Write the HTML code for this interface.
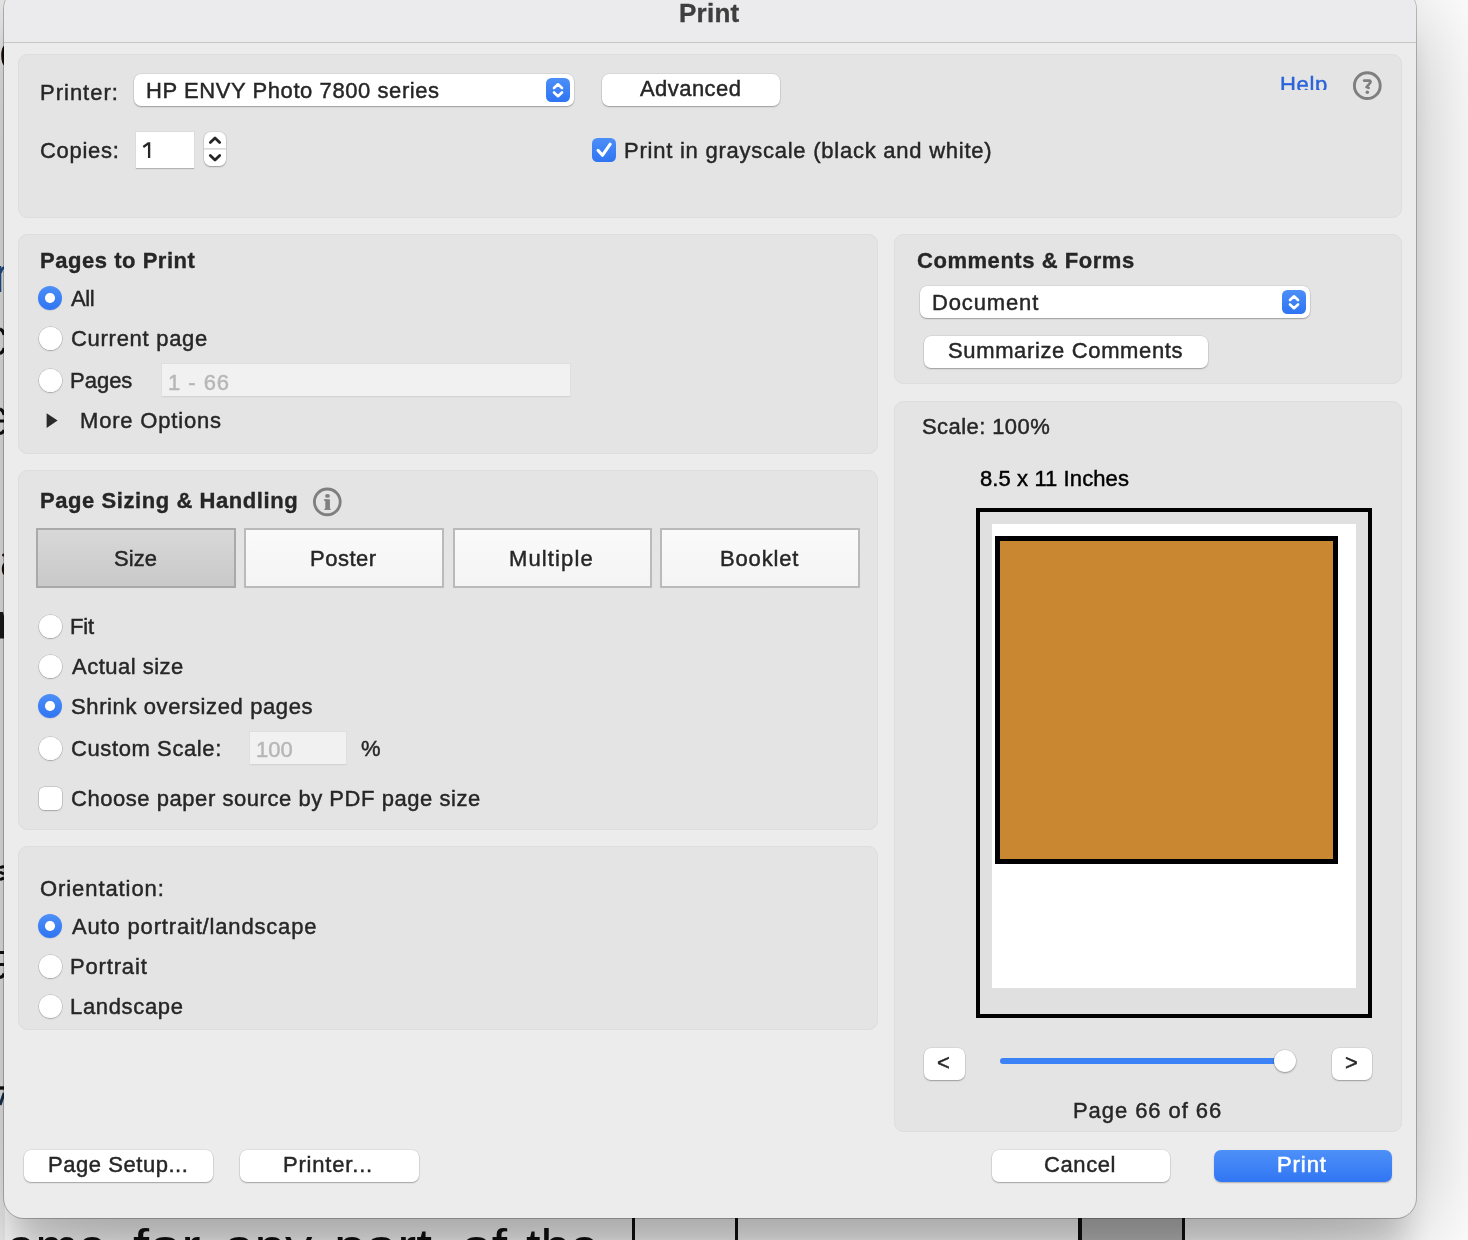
<!DOCTYPE html>
<html><head><meta charset="utf-8"><title>Print</title>
<style>
html,body{margin:0;padding:0;}
html{width:1468px;height:1240px;overflow:hidden;}
body{width:1468px;height:1240px;overflow:hidden;position:relative;background:#fff;font-family:"Liberation Sans",sans-serif;}
.t{position:absolute;white-space:pre;will-change:transform;-webkit-text-stroke:0.45px;font-family:"Liberation Sans",sans-serif;}
#dlg{position:absolute;left:3.5px;top:-11px;width:1412.5px;height:1228.5px;background:#ececec;border-radius:20px;
 box-shadow:0 0 0 1px rgba(0,0,0,.24),0 20px 110px rgba(0,0,0,.30),0 40px 30px -10px rgba(0,0,0,.16);}
#tb{position:absolute;left:3.5px;top:-11px;width:1412.5px;height:53px;background:#ebebed;border-bottom:1px solid #c6c6c6;border-radius:20px 20px 0 0;}
.grp{position:absolute;background:#e4e4e4;border:1px solid #dddddd;border-radius:9.5px;box-sizing:border-box;}
.btn{position:absolute;background:#fff;border-radius:7px;box-sizing:border-box;box-shadow:0 0 0 .5px rgba(0,0,0,.10),0 1px 1.5px rgba(0,0,0,.28);}
.rad{position:absolute;width:23px;height:23px;border-radius:50%;box-sizing:border-box;background:radial-gradient(circle at 50% 45%,#fff 60%,#f1f1f1 100%);box-shadow:0 0 0 .5px rgba(0,0,0,.22),0 1px 1.5px rgba(0,0,0,.18);}
.rad.on{width:24px;height:24px;background:linear-gradient(#4c8ff8,#2f74f2);box-shadow:0 .5px 1px rgba(0,0,0,.2);}
.rad.on:after{content:"";position:absolute;left:7.25px;top:7.25px;width:9.5px;height:9.5px;border-radius:50%;background:#fff;}
.fld{position:absolute;background:#f1f1f1;box-sizing:border-box;border-bottom:1px solid #d4d4d4;box-shadow:0 0 0 .5px rgba(0,0,0,.04);}
.tab{position:absolute;box-sizing:border-box;border:2px solid #bababa;background:linear-gradient(#fafafa,#f4f4f4);}
.tab.sel{border:2px solid #a9a9a9;background:linear-gradient(#d8d8d8,#c9c9c9);}
.cap{position:absolute;width:24px;height:24px;border-radius:5.5px;background:linear-gradient(#4c8ff8,#2f74f2);}
#root{position:absolute;left:0;top:0;width:1468px;height:1240px;overflow:hidden;background:#fff;contain:paint;}
</style></head><body>
<div id="root">
<div class="t" style="left:6.87px;top:1220.00px;font-size:48px;line-height:53px;color:#111;-webkit-text-stroke:0;transform-origin:0 0;transform:scaleX(1.0644);">ame</div>
<div class="t" style="left:133.24px;top:1220.00px;font-size:48px;line-height:53px;color:#111;-webkit-text-stroke:0;transform-origin:0 0;transform:scaleX(1.2082);">for</div>
<div class="t" style="left:223.72px;top:1220.00px;font-size:48px;line-height:53px;color:#111;-webkit-text-stroke:0;transform-origin:0 0;transform:scaleX(1.1410);">any</div>
<div class="t" style="left:334.45px;top:1220.00px;font-size:48px;line-height:53px;color:#111;-webkit-text-stroke:0;transform-origin:0 0;transform:scaleX(1.1843);">part</div>
<div class="t" style="left:460.70px;top:1220.00px;font-size:48px;line-height:53px;color:#111;-webkit-text-stroke:0;transform-origin:0 0;transform:scaleX(1.1503);">of</div>
<div class="t" style="left:526.32px;top:1220.00px;font-size:48px;line-height:53px;color:#111;-webkit-text-stroke:0;transform-origin:0 0;transform:scaleX(1.0938);">the</div>
<div style="position:absolute;left:631.5px;top:1210px;width:3.0px;height:30px;background:#111;"></div>
<div style="position:absolute;left:735px;top:1210px;width:3px;height:30px;background:#111;"></div>
<div style="position:absolute;left:1078px;top:1210px;width:107px;height:30px;background:#bebebe;"></div>
<div style="position:absolute;left:1078px;top:1210px;width:4px;height:30px;background:#111;"></div>
<div style="position:absolute;left:1181.5px;top:1210px;width:3.5px;height:30px;background:#111;"></div>
<div style="position:absolute;left:0px;top:0px;width:5px;height:1240px;background:#f0f0f0;"></div>
<svg style="position:absolute;left:0;top:0" width="6" height="1240" viewBox="0 0 6 1240"><ellipse cx="4.6" cy="55.5" rx="3.4" ry="10" fill="#1a0f08"/><rect x="0" y="266" width="1.3" height="26" fill="#1f4e8c"/><path d="M0.5 273 Q2 268 4 267.5" stroke="#1f4e8c" stroke-width="2.6" fill="none"/><path d="M0 329 Q3.2 330 4.2 335" stroke="#111" stroke-width="3.2" fill="none"/><path d="M0 353.5 Q3.2 352.5 4.2 348" stroke="#111" stroke-width="3.2" fill="none"/><path d="M0 409 Q3.2 410 4.2 415" stroke="#111" stroke-width="3.2" fill="none"/><rect x="0" y="419.5" width="4" height="3" fill="#111"/><path d="M0 433.5 Q3 433 4.2 430" stroke="#111" stroke-width="3.2" fill="none"/><circle cx="3.6" cy="555" r="1.6" fill="#2a1608"/><ellipse cx="4.4" cy="569" rx="2.6" ry="6" fill="#1a0f08"/><path d="M0 612 L3 612 L4 616 L4 638.5 L0 638.5 Z" fill="#1c1c1c"/><path d="M0 867.5 L4 866.5 M0 872 L4 874 M0 879.5 L4 878" stroke="#111" stroke-width="3" fill="none"/><path d="M0 952.5 L4 952.5 M0 964.5 L4 964.5 M0 977.5 Q3 977 4.2 973.5" stroke="#111" stroke-width="3.2" fill="none"/><path d="M0 1088 L4 1088" stroke="#111" stroke-width="3.4" fill="none"/><path d="M4.2 1093 L0 1105" stroke="#16324f" stroke-width="3" fill="none"/></svg>
<div id="dlg"></div><div id="tb"></div>
<div class="t " style="left:678.58px;top:-2.00px;font-size:26px;line-height:30px;font-weight:700;color:#3e3e3e;letter-spacing:0.231px;-webkit-text-stroke:0.35px;">Print</div>
<div class="grp" style="left:18px;top:54px;width:1384px;height:164px"></div>
<div class="grp" style="left:18px;top:234px;width:860px;height:220px"></div>
<div class="grp" style="left:18px;top:470px;width:860px;height:359.5px"></div>
<div class="grp" style="left:18px;top:846px;width:860px;height:183.5px"></div>
<div class="grp" style="left:894px;top:234px;width:508px;height:149.5px"></div>
<div class="grp" style="left:894px;top:400.5px;width:508px;height:731.0px"></div>
<div class="t " style="left:39.70px;top:80.00px;font-size:22px;line-height:25px;font-weight:400;color:#262626;letter-spacing:0.996px;">Printer:</div>
<div class="btn" style="left:133.5px;top:74px;width:440.5px;height:32px;"></div>
<div class="t " style="left:145.95px;top:78.00px;font-size:22px;line-height:25px;font-weight:400;color:#262626;letter-spacing:0.577px;">HP ENVY Photo 7800 series</div>
<div class="cap" style="left:546px;top:78px"><svg width="24" height="24" viewBox="0 0 24 24" style="position:absolute;left:0;top:0"><path d="M8 10 L12 6.3 L16 10 M8 14.5 L12 18.2 L16 14.5" fill="none" stroke="#fff" stroke-width="2.6" stroke-linecap="round" stroke-linejoin="round"/></svg></div>
<div class="btn" style="left:601.5px;top:74px;width:178.5px;height:32px;"></div>
<div class="t " style="left:639.70px;top:76.00px;font-size:22px;line-height:25px;font-weight:400;color:#262626;letter-spacing:0.443px;">Advanced</div>
<div style="position:absolute;left:1270px;top:60px;width:70px;height:29.5px;overflow:hidden">
<div class="t " style="left:10.45px;top:12.00px;font-size:22px;line-height:25px;font-weight:400;color:#2a63da;letter-spacing:0.658px;">Help</div>
</div>
<svg style="position:absolute;left:1352px;top:70px" width="31" height="31" viewBox="0 0 31 31"><circle cx="15.3" cy="15.65" r="12.9" fill="none" stroke="#7f7f7f" stroke-width="2.9"/><path d="M12.1 10.6 H17 Q19.2 10.7 18.3 12.7 Q17.6 13.9 14.5 17.1 L16.7 17.9" fill="none" stroke="#7f7f7f" stroke-width="2.6" stroke-linecap="round" stroke-linejoin="round"/><circle cx="15.3" cy="22.3" r="1.75" fill="#7f7f7f"/></svg>
<div class="t " style="left:40.45px;top:138.00px;font-size:22px;line-height:25px;font-weight:400;color:#262626;letter-spacing:0.704px;">Copies:</div>
<div style="position:absolute;left:135.75px;top:132px;width:58.5px;height:36.5px;background:#fff;box-shadow:0 0 0 .5px rgba(0,0,0,.08);border-bottom:1.5px solid #b4b4b4;box-sizing:border-box;"></div>
<svg style="position:absolute;left:140px;top:138px" width="14" height="24" viewBox="0 0 14 24"><path d="M3.3 9.0 L8.3 5.3 L9.1 5.3 L9.1 19.9" fill="none" stroke="#262626" stroke-width="2.3" stroke-linejoin="miter"/></svg>
<div class="btn" style="left:204px;top:132px;width:22px;height:34px;border-radius:6.5px;"></div>
<svg style="position:absolute;left:204px;top:132px" width="22" height="34" viewBox="0 0 22 34"><path d="M6.3 10.4 L11 5.9 L15.7 10.4 M6.3 23.5 L11 28 L15.7 23.5" fill="none" stroke="#262626" stroke-width="2.8" stroke-linecap="round" stroke-linejoin="round"/><rect x="0" y="16.2" width="22" height="1.4" fill="#d4d4d4"/></svg>
<div class="cap" style="left:592px;top:138px;border-radius:5.5px"><svg width="24" height="24" viewBox="0 0 24 24" style="position:absolute;left:0;top:0"><path d="M6.0 12.3 L10.4 17.3 L18.2 6.2" fill="none" stroke="#fff" stroke-width="3.1" stroke-linecap="round" stroke-linejoin="round"/></svg></div>
<div class="t " style="left:623.95px;top:138.00px;font-size:22px;line-height:25px;font-weight:400;color:#262626;letter-spacing:0.756px;">Print in grayscale (black and white)</div>
<div class="t " style="left:40.08px;top:248.00px;font-size:22px;line-height:25px;font-weight:700;color:#262626;letter-spacing:0.537px;-webkit-text-stroke:0.35px;">Pages to Print</div>
<div class="rad on" style="left:38px;top:286px"></div>
<div class="t " style="left:71.40px;top:286.00px;font-size:22px;line-height:25px;font-weight:400;color:#262626;letter-spacing:-0.363px;">All</div>
<div class="rad" style="left:38.5px;top:326.5px"></div>
<div class="t " style="left:70.95px;top:326.00px;font-size:22px;line-height:25px;font-weight:400;color:#262626;letter-spacing:0.714px;">Current page</div>
<div class="rad" style="left:38.5px;top:368.5px"></div>
<div class="t " style="left:70.20px;top:368.00px;font-size:22px;line-height:25px;font-weight:400;color:#262626;letter-spacing:-0.006px;">Pages</div>
<div class="fld" style="left:162px;top:364px;width:408px;height:32.5px"></div>
<div class="t " style="left:167.82px;top:370.00px;font-size:22px;line-height:25px;font-weight:400;color:#b6b6b6;letter-spacing:0.970px;">1 - 66</div>
<svg style="position:absolute;left:44px;top:410px" width="18" height="22" viewBox="0 0 18 22"><path d="M2.6 3.2 L13.6 10.6 L2.6 18 Z" fill="#2b2b2b"/></svg>
<div class="t " style="left:80.20px;top:408.00px;font-size:22px;line-height:25px;font-weight:400;color:#262626;letter-spacing:0.816px;">More Options</div>
<div class="t " style="left:40.08px;top:488.00px;font-size:22px;line-height:25px;font-weight:700;color:#262626;letter-spacing:0.570px;-webkit-text-stroke:0.35px;">Page Sizing &amp; Handling</div>
<svg style="position:absolute;left:312px;top:487px" width="31" height="31" viewBox="0 0 31 31"><circle cx="15.3" cy="14.9" r="12.9" fill="none" stroke="#7f7f7f" stroke-width="2.9"/><g fill="#7f7f7f"><ellipse cx="15.5" cy="8.9" rx="2.4" ry="1.95"/><rect x="13.3" y="12.3" width="4.6" height="10.4"/><path d="M11.9 12.3 H15 V13.8 H11.9 Z"/><path d="M11.7 22.7 L13.3 21.2 H17.9 L19.2 22.7 Z"/></g></svg>
<div class="tab sel" style="left:36.25px;top:528px;width:199.5px;height:59.5px"></div>
<div class="tab" style="left:244.25px;top:528px;width:199.5px;height:59.5px"></div>
<div class="tab" style="left:452.5px;top:528px;width:199.25px;height:59.5px"></div>
<div class="tab" style="left:660.25px;top:528px;width:199.5px;height:59.5px"></div>
<div class="t " style="left:114.20px;top:546.00px;font-size:22px;line-height:25px;font-weight:400;color:#262626;letter-spacing:0.033px;">Size</div>
<div class="t " style="left:310.20px;top:546.00px;font-size:22px;line-height:25px;font-weight:400;color:#262626;letter-spacing:0.520px;">Poster</div>
<div class="t " style="left:509.45px;top:546.00px;font-size:22px;line-height:25px;font-weight:400;color:#262626;letter-spacing:1.121px;">Multiple</div>
<div class="t " style="left:719.70px;top:546.00px;font-size:22px;line-height:25px;font-weight:400;color:#262626;letter-spacing:0.850px;">Booklet</div>
<div class="rad" style="left:38.5px;top:614.5px"></div>
<div class="t " style="left:70.20px;top:614.00px;font-size:22px;line-height:25px;font-weight:400;color:#262626;letter-spacing:-0.138px;">Fit</div>
<div class="rad" style="left:38.5px;top:654.5px"></div>
<div class="t " style="left:71.95px;top:654.00px;font-size:22px;line-height:25px;font-weight:400;color:#262626;letter-spacing:0.485px;">Actual size</div>
<div class="rad on" style="left:38px;top:694px"></div>
<div class="t " style="left:70.95px;top:694.00px;font-size:22px;line-height:25px;font-weight:400;color:#262626;letter-spacing:0.612px;">Shrink oversized pages</div>
<div class="rad" style="left:38.5px;top:736.5px"></div>
<div class="t " style="left:70.95px;top:736.00px;font-size:22px;line-height:25px;font-weight:400;color:#262626;letter-spacing:0.602px;">Custom Scale:</div>
<div class="fld" style="left:250px;top:732px;width:96.25px;height:32.5px"></div>
<div class="t " style="left:255.82px;top:737.00px;font-size:22px;line-height:25px;font-weight:400;color:#b6b6b6;letter-spacing:-0.012px;">100</div>
<div class="t " style="left:360.95px;top:736.00px;font-size:22px;line-height:25px;font-weight:400;color:#262626;letter-spacing:0.000px;">%</div>
<div style="position:absolute;left:38.5px;top:786.5px;width:23.0px;height:23.0px;background:#fff;border-radius:5.5px;box-shadow:0 0 0 .5px rgba(0,0,0,.22),0 1px 1.5px rgba(0,0,0,.18);"></div>
<div class="t " style="left:70.95px;top:786.00px;font-size:22px;line-height:25px;font-weight:400;color:#262626;letter-spacing:0.546px;">Choose paper source by PDF page size</div>
<div class="t " style="left:40.45px;top:876.00px;font-size:22px;line-height:25px;font-weight:400;color:#262626;letter-spacing:0.918px;">Orientation:</div>
<div class="rad on" style="left:38px;top:914px"></div>
<div class="t " style="left:71.95px;top:914.00px;font-size:22px;line-height:25px;font-weight:400;color:#262626;letter-spacing:0.828px;">Auto portrait/landscape</div>
<div class="rad" style="left:38.5px;top:954.5px"></div>
<div class="t " style="left:70.20px;top:954.00px;font-size:22px;line-height:25px;font-weight:400;color:#262626;letter-spacing:0.836px;">Portrait</div>
<div class="rad" style="left:38.5px;top:994.5px"></div>
<div class="t " style="left:70.20px;top:994.00px;font-size:22px;line-height:25px;font-weight:400;color:#262626;letter-spacing:0.669px;">Landscape</div>
<div class="btn" style="left:23.5px;top:1149.5px;width:189.0px;height:32.5px;"></div>
<div class="t " style="left:47.85px;top:1152.00px;font-size:22px;line-height:25px;font-weight:400;color:#262626;letter-spacing:0.548px;">Page Setup...</div>
<div class="btn" style="left:240px;top:1149.5px;width:178.5px;height:32.5px;"></div>
<div class="t " style="left:283.15px;top:1152.00px;font-size:22px;line-height:25px;font-weight:400;color:#262626;letter-spacing:0.806px;">Printer...</div>
<div class="btn" style="left:992px;top:1150px;width:178px;height:32px;"></div>
<div class="t " style="left:1044.20px;top:1152.00px;font-size:22px;line-height:25px;font-weight:400;color:#262626;letter-spacing:0.595px;">Cancel</div>
<div style="position:absolute;left:1214px;top:1150px;width:178px;height:32px;border-radius:7px;background:linear-gradient(#4d90f8,#3176f3);box-shadow:0 1px 1.5px rgba(0,0,0,.25)"></div>
<div class="t " style="left:1276.65px;top:1152.00px;font-size:22px;line-height:25px;font-weight:400;color:#fff;letter-spacing:0.931px;-webkit-text-stroke:0.6px;">Print</div>
<div class="t " style="left:916.83px;top:248.00px;font-size:22px;line-height:25px;font-weight:700;color:#262626;letter-spacing:0.540px;-webkit-text-stroke:0.35px;">Comments &amp; Forms</div>
<div class="btn" style="left:919.5px;top:286px;width:390.5px;height:32px;"></div>
<div class="t " style="left:931.95px;top:290.00px;font-size:22px;line-height:25px;font-weight:400;color:#262626;letter-spacing:0.854px;">Document</div>
<div class="cap" style="left:1282px;top:290px"><svg width="24" height="24" viewBox="0 0 24 24" style="position:absolute;left:0;top:0"><path d="M8 10 L12 6.3 L16 10 M8 14.5 L12 18.2 L16 14.5" fill="none" stroke="#fff" stroke-width="2.6" stroke-linecap="round" stroke-linejoin="round"/></svg></div>
<div class="btn" style="left:924px;top:336px;width:283.79999999999995px;height:32px;"></div>
<div class="t " style="left:948.45px;top:338.00px;font-size:22px;line-height:25px;font-weight:400;color:#262626;letter-spacing:0.638px;">Summarize Comments</div>
<div class="t " style="left:922.20px;top:414.00px;font-size:22px;line-height:25px;font-weight:400;color:#262626;letter-spacing:0.422px;">Scale: 100%</div>
<div class="t " style="left:979.83px;top:466.00px;font-size:22px;line-height:25px;font-weight:400;color:#000;letter-spacing:0.096px;">8.5 x 11 Inches</div>
<div style="position:absolute;left:976px;top:508px;width:396px;height:510px;background:#e0e0e0;border:4px solid #000;box-sizing:border-box;"></div>
<div style="position:absolute;left:992px;top:524px;width:364px;height:464px;background:#fff;"></div>
<div style="position:absolute;left:995px;top:536px;width:343px;height:328px;background:#c98731;border:5px solid #000;box-sizing:border-box;"></div>
<div class="btn" style="left:924px;top:1047.5px;width:40.5px;height:32.5px;"></div>
<div class="t " style="left:936.90px;top:1050.00px;font-size:22px;line-height:25px;font-weight:400;color:#262626;letter-spacing:0.000px;">&lt;</div>
<div class="btn" style="left:1332px;top:1047.5px;width:40px;height:32.5px;"></div>
<div class="t " style="left:1345.20px;top:1050.00px;font-size:22px;line-height:25px;font-weight:400;color:#262626;letter-spacing:0.000px;">&gt;</div>
<div style="position:absolute;left:1000px;top:1058px;width:285px;height:6px;background:#3b82f6;border-radius:3px;"></div>
<div style="position:absolute;left:1274px;top:1050px;width:22px;height:22px;background:#fff;border-radius:50%;box-shadow:0 0 0 .5px rgba(0,0,0,.12),0 1px 2px rgba(0,0,0,.3);"></div>
<div class="t " style="left:1073.20px;top:1098.00px;font-size:22px;line-height:25px;font-weight:400;color:#262626;letter-spacing:0.935px;">Page 66 of 66</div>
</div>
</body></html>
